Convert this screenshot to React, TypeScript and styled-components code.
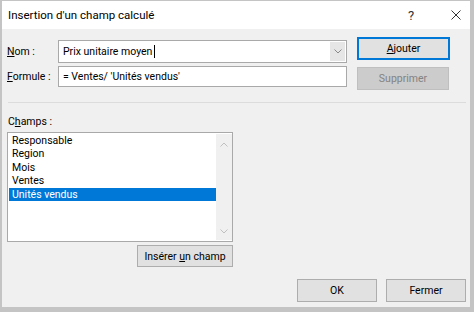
import React from "react";
import styled, { createGlobalStyle } from "styled-components";

const Global = createGlobalStyle`
  html, body { margin: 0; padding: 0; background: #ffffff; }
  body { font-family: Roboto, "Noto Sans", sans-serif; }
`;

const Window = styled.div`
  width: 474px;
  height: 312px;
  box-sizing: border-box;
  border-style: solid;
  border-color: #c4c4c4;
  border-width: 1px 4px 5px 2px;
  display: flex;
  flex-direction: column;
  background: #f0f0f0;
  font-size: 10.5px;
  color: #000;
`;

const TitleBar = styled.div`
  height: 28px;
  flex: none;
  background: #ffffff;
  display: flex;
  align-items: center;
  padding: 0 6px 0 6px;
  font-size: 11.5px;
`;

const Title = styled.span`
  flex: 1;
`;

const TitleIcon = styled.span<{ $size: number; $ml?: number }>`
  width: 16px;
  display: flex;
  justify-content: center;
  color: #333;
  font-size: ${(p) => p.$size}px;
  margin-left: ${(p) => p.$ml ?? 0}px;
`;

const Body = styled.div`
  flex: 1;
  display: flex;
  flex-direction: column;
  padding: 8px 4px 0 5px;
`;

const TopBlock = styled.div`
  display: flex;
  gap: 10px;
`;

const FieldCol = styled.div`
  width: 340px;
  display: flex;
  flex-direction: column;
  gap: 3px;
  padding-top: 3px;
`;

const FieldRow = styled.div`
  display: flex;
  align-items: center;
`;

const Label = styled.span`
  width: 51px;
  flex: none;
`;

const Key = styled.span`
  text-decoration: underline;
  text-underline-offset: 1px;
`;

const Input = styled.div<{ $h: number }>`
  flex: 1;
  height: ${(p) => p.$h}px;
  box-sizing: border-box;
  background: #fff;
  border: 1px solid #a9a9a9;
  display: flex;
  align-items: center;
  padding-left: 4px;
  white-space: nowrap;
`;

const Caret = styled.span`
  display: inline-block;
  width: 1px;
  height: 13px;
  background: #000;
  margin-left: 2px;
`;

const Spacer = styled.span`
  flex: 1;
`;

const DropBtn = styled.div`
  width: 15px;
  height: 19px;
  margin-right: 1px;
  background: #e6e6e6;
  display: flex;
  align-items: center;
  justify-content: center;
`;

const ButtonCol = styled.div`
  display: flex;
  flex-direction: column;
  gap: 7px;
`;

const Button = styled.div<{ $w: number; $h?: number; $default?: boolean; $disabled?: boolean }>`
  width: ${(p) => p.$w}px;
  height: ${(p) => p.$h ?? 23}px;
  box-sizing: border-box;
  display: flex;
  align-items: center;
  justify-content: center;
  white-space: nowrap;
  background: ${(p) => (p.$disabled ? "#cccccc" : "#e1e1e1")};
  border: ${(p) =>
    p.$default ? "2px solid #0078d7" : p.$disabled ? "1px solid #bfbfbf" : "1px solid #adadad"};
  color: ${(p) => (p.$disabled ? "#838383" : "#000")};
`;

const Separator = styled.div`
  height: 1px;
  background: #dcdcdc;
  margin: 12px 0 0 1px;
  width: 458px;
`;

const SectionLabel = styled.div`
  margin-top: 11px;
  margin-left: 1px;
  height: 16px;
  line-height: 16px;
`;

const ListBox = styled.div`
  margin-top: 2px;
  width: 226px;
  height: 110px;
  box-sizing: border-box;
  border: 1px solid #a9a9a9;
  background: #fff;
  display: flex;
  padding: 1px 0 1px 1px;
`;

const Items = styled.div`
  flex: 1;
  display: flex;
  flex-direction: column;
`;

const Item = styled.div<{ $sel?: boolean }>`
  height: 13.4px;
  line-height: 13.4px;
  padding-left: 3px;
  background: ${(p) => (p.$sel ? "#0078d7" : "transparent")};
  color: ${(p) => (p.$sel ? "#fff" : "#000")};
`;

const ScrollBar = styled.div`
  width: 16px;
  background: #f0f0f0;
  display: flex;
  flex-direction: column;
  justify-content: space-between;
  align-items: center;
  padding: 8px 0 6px;
`;

const InsertRow = styled.div`
  width: 226px;
  display: flex;
  justify-content: flex-end;
  margin-top: 3px;
`;

const Footer = styled.div`
  display: flex;
  justify-content: flex-end;
  gap: 9px;
  margin-top: 12px;
`;

const Chevron = ({ up, color = "#8a8a8a" }: { up?: boolean; color?: string }) => (
  <svg width="8" height="5" viewBox="0 0 8 5">
    <path d={up ? "M0.5 4.5 L4 1 L7.5 4.5" : "M0.5 0.5 L4 4 L7.5 0.5"} fill="none" stroke={color} strokeWidth="1" />
  </svg>
);

export default function App() {
  return (
    <>
      <Global />
      <Window>
        <TitleBar>
          <Title>Insertion d'un champ calculé</Title>
          <TitleIcon $size={13}>?</TitleIcon>
          <TitleIcon $size={17} $ml={29}>
            <svg width="10" height="10" viewBox="0 0 10 10">
              <path d="M0.5 0.5 L9.5 9.5 M9.5 0.5 L0.5 9.5" stroke="#333" strokeWidth="1" />
            </svg>
          </TitleIcon>
        </TitleBar>
        <Body>
          <TopBlock>
            <FieldCol>
              <FieldRow>
                <Label>
                  <Key>N</Key>om :
                </Label>
                <Input $h={23}>
                  Prix unitaire moyen
                  <Caret />
                  <Spacer />
                  <DropBtn>
                    <Chevron />
                  </DropBtn>
                </Input>
              </FieldRow>
              <FieldRow>
                <Label>
                  <Key>F</Key>ormule :
                </Label>
                <Input $h={21}>= Ventes/ 'Unités vendus'</Input>
              </FieldRow>
            </FieldCol>
            <ButtonCol>
              <Button $w={93} $default>
                <Key>A</Key>jouter
              </Button>
              <Button $w={92} $disabled>
                Supprimer
              </Button>
            </ButtonCol>
          </TopBlock>
          <Separator />
          <SectionLabel>
            C<Key>h</Key>amps :
          </SectionLabel>
          <ListBox>
            <Items>
              <Item>Responsable</Item>
              <Item>Region</Item>
              <Item>Mois</Item>
              <Item>Ventes</Item>
              <Item $sel>Unités vendus</Item>
            </Items>
            <ScrollBar>
              <Chevron up color="#c0c0c0" />
              <Chevron color="#c0c0c0" />
            </ScrollBar>
          </ListBox>
          <InsertRow>
            <Button $w={96} $h={22}>
              Insérer&nbsp;<Key>u</Key>n champ
            </Button>
          </InsertRow>
          <Footer>
            <Button $w={80}>OK</Button>
            <Button $w={80}>Fermer</Button>
          </Footer>
        </Body>
      </Window>
    </>
  );
}
